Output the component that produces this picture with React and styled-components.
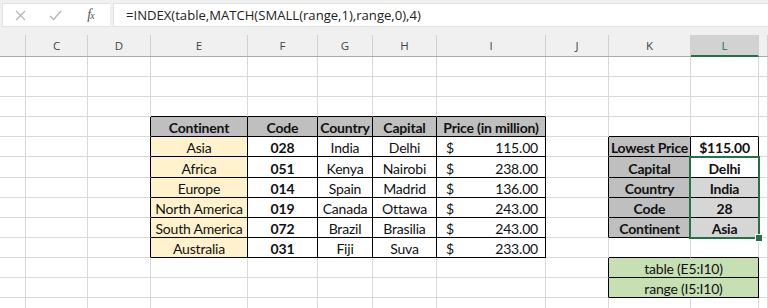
import React from 'react'
import styled, { createGlobalStyle, css } from 'styled-components'

const GlobalStyle = createGlobalStyle`
  html, body {
    margin: 0;
    padding: 0;
    background: #ffffff;
    overflow: hidden;
  }
`

const COLS = [
  { key: 'B', w: 26 },
  { key: 'C', w: 62 },
  { key: 'D', w: 63 },
  { key: 'E', w: 97 },
  { key: 'F', w: 70 },
  { key: 'G', w: 55 },
  { key: 'H', w: 64 },
  { key: 'I', w: 109 },
  { key: 'J', w: 63 },
  { key: 'K', w: 82 },
  { key: 'L', w: 68 },
  { key: 'M', w: 9 },
]
const ROW_COUNT = 13
const template = COLS.map((c) => `${c.w}px`).join(' ')

// cell contents, keyed by "COL+row" (row 1 = first row under the header band)
const cells = {}
const put = (col, row, props) => { cells[`${col}${row}`] = { table: true, ...props } }

const GREY = '#bfbfbf'
const TAN = '#fff2cc'
const GREEN = '#c6e0b4'

;['Continent', 'Code', 'Country', 'Capital', 'Price (in million)'].forEach((t, i) => {
  put('EFGHI'[i], 4, { text: t, bold: true, bg: GREY })
})

const rows = [
  ['Asia', '028', 'India', 'Delhi', '115.00'],
  ['Africa', '051', 'Kenya', 'Nairobi', '238.00'],
  ['Europe', '014', 'Spain', 'Madrid', '136.00'],
  ['North America', '019', 'Canada', 'Ottawa', '243.00'],
  ['South America', '072', 'Brazil', 'Brasilia', '243.00'],
  ['Australia', '031', 'Fiji', 'Suva', '233.00'],
]
rows.forEach((r, i) => {
  const row = 5 + i
  put('E', row, { text: r[0], bg: TAN })
  put('F', row, { text: r[1], bold: true })
  put('G', row, { text: r[2] })
  put('H', row, { text: r[3] })
  put('I', row, { money: r[4] })
})

const lookup = [
  ['Lowest Price', '$115.00'],
  ['Capital', 'Delhi'],
  ['Country', 'India'],
  ['Code', '28'],
  ['Continent', 'Asia'],
]
lookup.forEach((r, i) => {
  const row = 5 + i
  put('K', row, { text: r[0], bold: true, bg: GREY })
  put('L', row, { text: r[1], bold: true, bg: i > 1 ? '#d6d6d6' : '#ffffff' })
})

put('K', 11, { text: 'table (E5:I10)', bg: GREEN, span: 2 })
put('K', 12, { text: 'range (I5:I10)', bg: GREEN, span: 2 })
put('L', 11, { hidden: true })
put('L', 12, { hidden: true })

const isTable = (ci, row) => {
  const col = COLS[ci]
  if (!col) return false
  const c = cells[`${col.key}${row}`]
  return !!(c && c.table)
}

const Window = styled.div`
  width: 768px;
  height: 308px;
  display: flex;
  flex-direction: column;
  overflow: hidden;
  background: #f0f0f0;
  font-family: Lato, 'Liberation Sans', sans-serif;
`

const FormulaBar = styled.div`
  flex-shrink: 0;
  display: flex;
  align-items: stretch;
  gap: 3px;
  height: 24px;
  padding: 3px 0 8px 2px;
`

const ButtonBox = styled.div`
  width: 108px;
  display: flex;
  align-items: center;
  background: #ffffff;
  border: 1px solid #e2e2e2;
  border-right: none;
  box-sizing: border-box;
`

const IconSlot = styled.div`
  width: 35px;
  display: flex;
  align-items: center;
  justify-content: center;
  color: #b4b4b4;
`

const Fx = styled.span`
  font-family: 'Liberation Serif', serif;
  font-style: italic;
  font-size: 14px;
  color: #555555;
  letter-spacing: -1px;
  sub {
    font-size: 10px;
    vertical-align: baseline;
  }
`

const FormulaInput = styled.div`
  flex: 1;
  display: flex;
  align-items: center;
  padding-left: 12px;
  background: #ffffff;
  border: 1px solid #e2e2e2;
  border-right: none;
  font-family: 'Open Sans', sans-serif;
  font-size: 13.1px;
  color: #222222;
  white-space: nowrap;
`

const HeaderRow = styled.div`
  flex-shrink: 0;
  display: grid;
  grid-template-columns: ${template};
  height: 22px;
  border-bottom: 1px solid #ababab;
  box-sizing: border-box;
`

const ColHead = styled.div`
  position: relative;
  display: flex;
  align-items: center;
  justify-content: center;
  font-family: 'Open Sans', sans-serif;
  font-size: 11.5px;
  color: #444444;
  border-right: 1px solid #d0d0d0;
  box-sizing: border-box;
  ${(p) => p.$selected && css`
    background: #d2d2d2;
    color: #217346;
    border-bottom: 2px solid #217346;
    margin-bottom: -1px;
  `}
`

const SheetWrap = styled.div`
  position: relative;
  flex: 1;
  min-height: 0;
  overflow: hidden;
  background: #ffffff;
`

const Sheet = styled.div`
  display: grid;
  grid-template-columns: ${template};
  grid-auto-rows: 20.1px;
`

const Cell = styled.div`
  box-sizing: border-box;
  grid-column: span ${(p) => p.$span || 1};
  display: flex;
  align-items: center;
  justify-content: center;
  padding: 2px 2px 0;
  overflow: hidden;
  white-space: nowrap;
  font-size: 14px;
  letter-spacing: -0.2px;
  color: #111111;
  font-weight: ${(p) => (p.$bold ? 700 : 400)};
  background: ${(p) => p.$bg || '#ffffff'};
  border-right: 1px solid ${(p) => p.$rightLine};
  border-bottom: 1px solid ${(p) => p.$bottomLine};
`

const Money = styled.div`
  flex: 1;
  display: flex;
  justify-content: space-between;
  padding: 0 5px 0 7px;
`

const Selection = styled.div`
  position: absolute;
  left: 689px;
  top: 99px;
  width: 71px;
  height: 83px;
  border: 2px solid #217346;
  box-sizing: border-box;
  pointer-events: none;
`

const Handle = styled.div`
  position: absolute;
  right: -5px;
  bottom: -5px;
  width: 6px;
  height: 6px;
  background: #217346;
  border: 1px solid #ffffff;
`

const CrossIcon = () => (
  <svg width="11" height="11" viewBox="0 0 11 11">
    <path d="M1 1 L10 10 M10 1 L1 10" stroke="currentColor" strokeWidth="1.2" fill="none" />
  </svg>
)

const CheckIcon = () => (
  <svg width="13" height="11" viewBox="0 0 13 11">
    <path d="M1 6 L4.5 9.5 L12 1" stroke="currentColor" strokeWidth="1.2" fill="none" />
  </svg>
)

export default function App() {
  const grid = []
  for (let row = 1; row <= ROW_COUNT; row++) {
    COLS.forEach((col, ci) => {
      const c = cells[`${col.key}${row}`] || {}
      if (c.hidden) return
      const span = c.span || 1
      const lastCi = ci + span - 1
      const inTable = isTable(ci, row)
      const rightLine = inTable || isTable(lastCi + 1, row) ? '#000000' : '#d9d9d9'
      const bottomLine = inTable || isTable(ci, row + 1) ? '#000000' : '#d9d9d9'
      grid.push(
        <Cell
          key={`${col.key}${row}`}
          $span={span}
          $bold={c.bold}
          $bg={c.bg}
          $rightLine={rightLine}
          $bottomLine={bottomLine}
        >
          {c.money ? (
            <Money>
              <span>$</span>
              <span>{c.money}</span>
            </Money>
          ) : (
            c.text
          )}
        </Cell>
      )
    })
  }

  return (
    <>
      <GlobalStyle />
      <Window>
        <FormulaBar>
          <ButtonBox>
            <IconSlot><CrossIcon /></IconSlot>
            <IconSlot><CheckIcon /></IconSlot>
            <IconSlot><Fx>f<sub>x</sub></Fx></IconSlot>
          </ButtonBox>
          <FormulaInput>=INDEX(table,MATCH(SMALL(range,1),range,0),4)</FormulaInput>
        </FormulaBar>
        <HeaderRow>
          {COLS.map((col) => (
            <ColHead key={col.key} $selected={col.key === 'L'}>
              {col.key === 'B' || col.key === 'M' ? '' : col.key}
            </ColHead>
          ))}
        </HeaderRow>
        <SheetWrap>
          <Sheet>{grid}</Sheet>
          <Selection>
            <Handle />
          </Selection>
        </SheetWrap>
      </Window>
    </>
  )
}
